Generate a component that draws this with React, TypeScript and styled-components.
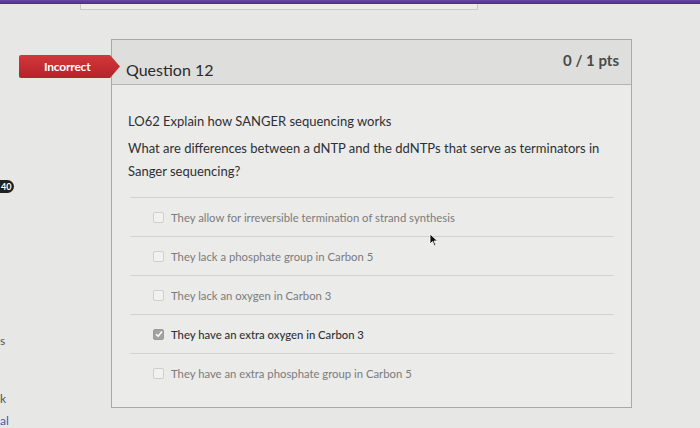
import React from "react";
import styled, { createGlobalStyle } from "styled-components";

const Global = createGlobalStyle`
  html, body { margin: 0; padding: 0; }
  body {
    width: 700px; height: 428px; overflow: hidden;
    background: #e7e8e6;
    font-family: Lato, "Open Sans", sans-serif;
  }
`;

const Page = styled.div`
  width: 700px;
  height: 428px;
  display: flex;
  flex-direction: column;
`;

const TopBar = styled.div`
  height: 4px;
  background: linear-gradient(#6a46a6, #4d2f84);
`;

const PrevBox = styled.div`
  margin-left: 80px;
  width: 396px;
  height: 5px;
  border: 1px solid #c9c9c7;
  border-top: none;
  background: #ececeb;
`;

const Main = styled.div`
  display: flex;
  margin-top: 29px;
`;

const Sidebar = styled.div`
  width: 15px;
  flex-shrink: 0;
  overflow: hidden;
  display: flex;
  flex-direction: column;
`;

const SideItem = styled.div<{ $top: number; $color: string }>`
  margin-top: ${(p) => p.$top}px;
  display: flex;
  justify-content: flex-start;
  white-space: nowrap;
  font-size: 12px;
  line-height: 14px;
  color: ${(p) => p.$color};
`;

const Pill = styled.span`
  background: #1f2123;
  color: #fff;
  font-size: 9px;
  font-weight: 700;
  line-height: 13px;
  padding: 0 3px 0 1px;
  border-radius: 0 7px 7px 0;
`;

const QuestionRow = styled.div`
  display: flex;
  align-items: flex-start;
`;

const Badge = styled.div`
  position: relative;
  z-index: 1;
  margin-top: 16px;
  margin-left: 4px;
  margin-right: -9px;
  width: 101px;
  height: 23px;
  flex-shrink: 0;
  background: linear-gradient(#d2383a, #b5222a);
  clip-path: polygon(0 0, 91px 0, 101px 50%, 91px 100%, 0 100%);
  border-radius: 2px 0 0 2px;
  color: #fff;
  font-size: 12px;
  font-weight: 700;
  display: flex;
  align-items: center;
  padding-left: 25px;
  box-sizing: border-box;
  letter-spacing: -0.2px;
`;

const Card = styled.div`
  width: 521px;
  border: 1px solid #a9a9a7;
  background: #ebebea;
  box-sizing: border-box;
`;

const Header = styled.div`
  height: 45px;
  display: flex;
  justify-content: space-between;
  align-items: flex-start;
  background: #dededd;
  border-bottom: 1px solid #b4b4b2;
  box-sizing: border-box;
  padding: 0 12px 0 14px;
`;

const Title = styled.div`
  margin-top: 20px;
  font-size: 16px;
  color: #2b2b2b;
`;

const Points = styled.div`
  margin-top: 11px;
  font-size: 15px;
  font-weight: 700;
  color: #4a4a4a;
`;

const Body = styled.div`
  padding: 25px 8px 15px 16px;
`;

const Text = styled.p`
  margin: 0 0 4px;
  font-size: 13px;
  line-height: 23px;
  color: #2d3033;
`;

const Answers = styled.div`
  position: relative;
  margin: 14px 9px 0 2px;
`;

const Answer = styled.div`
  height: 39px;
  display: flex;
  align-items: center;
  gap: 7px;
  padding-left: 23px;
  border-top: 1px solid #d2d2d0;
  box-sizing: border-box;
`;

const Box = styled.span<{ $checked?: boolean }>`
  width: 11px;
  height: 11px;
  border-radius: 2px;
  box-sizing: border-box;
  border: 1px solid ${(p) => (p.$checked ? "#9a9a9a" : "#cfcfcd")};
  background: ${(p) => (p.$checked ? "#a3a3a2" : "#f1f1f0")};
  display: flex;
  align-items: center;
  justify-content: center;
`;

const Label = styled.span<{ $checked?: boolean }>`
  font-size: 11.3px;
  color: ${(p) => (p.$checked ? "#2f3235" : "#7a7b7c")};
  font-weight: ${(p) => (p.$checked ? 500 : 400)};
`;

const Cursor = styled.svg`
  position: absolute;
  left: 299px;
  top: 36px;
`;

const answers = [
  "They allow for irreversible termination of strand synthesis",
  "They lack a phosphate group in Carbon 5",
  "They lack an oxygen in Carbon 3",
  "They have an extra oxygen in Carbon 3",
  "They have an extra phosphate group in Carbon 5",
];

export default function App() {
  return (
    <Page>
      <Global />
      <TopBar />
      <PrevBox />
      <Main>
        <Sidebar>
          <SideItem $top={141} $color="#fff">
            <Pill>40</Pill>
          </SideItem>
          <SideItem $top={141} $color="#555">
            s
          </SideItem>
          <SideItem $top={44} $color="#555">
            k
          </SideItem>
          <SideItem $top={8} $color="#3e5cb8">
            al
          </SideItem>
        </Sidebar>
        <QuestionRow>
          <Badge>Incorrect</Badge>
          <Card>
            <Header>
              <Title>Question 12</Title>
              <Points>0 / 1 pts</Points>
            </Header>
            <Body>
              <Text>LO62 Explain how SANGER sequencing works</Text>
              <Text>
                What are differences between a dNTP and the ddNTPs that serve as
                terminators in Sanger sequencing?
              </Text>
              <Answers>
                {answers.map((a, i) => {
                  const checked = i === 3;
                  return (
                    <Answer key={a}>
                      <Box $checked={checked}>
                        {checked && (
                          <svg width="8" height="8" viewBox="0 0 8 8">
                            <path d="M1 4.2 L3.2 6.2 L7 1.5" stroke="#fff" strokeWidth="1.5" fill="none" />
                          </svg>
                        )}
                      </Box>
                      <Label $checked={checked}>{a}</Label>
                    </Answer>
                  );
                })}
                <Cursor width="10" height="14" viewBox="0 0 10 14">
                  <path d="M1 1 L1 11 L3.5 8.5 L5.5 13 L7 12.3 L5 8 L8.5 8 Z" fill="#111" stroke="#fff" strokeWidth="0.8" />
                </Cursor>
              </Answers>
            </Body>
          </Card>
        </QuestionRow>
      </Main>
    </Page>
  );
}
